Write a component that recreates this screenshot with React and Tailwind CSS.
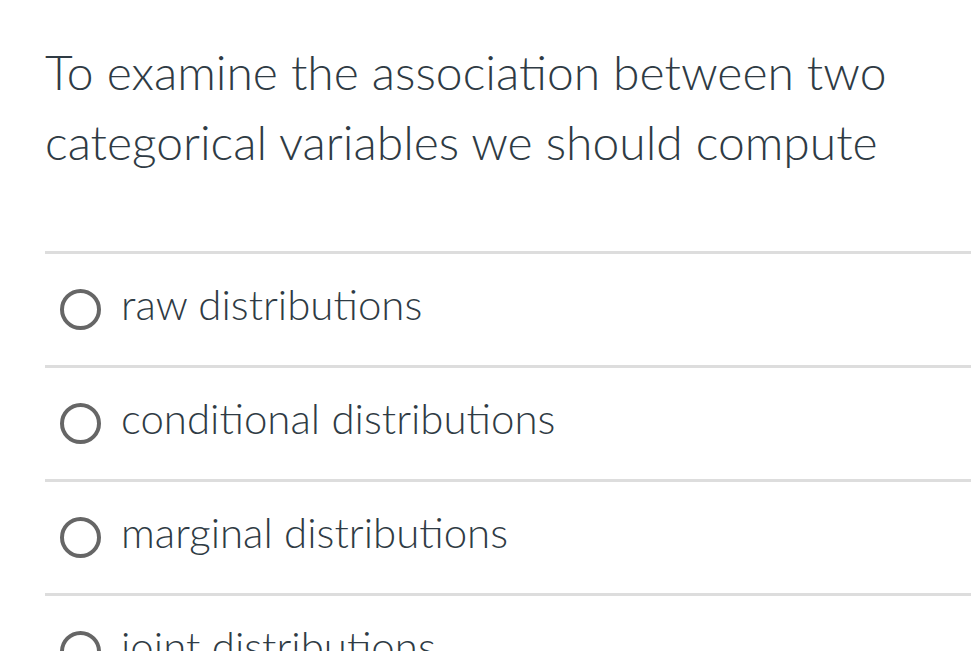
import React from 'react'

const options = [
  'raw distributions',
  'conditional distributions',
  'marginal distributions',
  'joint distributions',
]

function Radio() {
  return (
    <span className="w-[41px] h-[41px] rounded-full border-[4px] border-[#666666] bg-white flex-shrink-0" />
  )
}

export default function App() {
  return (
    <div
      className="w-[971px] h-[651px] overflow-hidden bg-white text-[#2f3b44]"
      style={{ fontFamily: '"Lato Light", Lato, "Open Sans", sans-serif' }}
    >
      <div className="pl-[45px]">
        {/* Question */}
        <p className="pt-[37px] text-[48px] leading-[70px] font-light">
          To examine the association between two
          <br />
          categorical variables we should compute
        </p>

        {/* Answers */}
        <div className="mt-[74px]">
          {options.map((opt) => (
            <div
              key={opt}
              className="h-[114px] border-t-[3px] border-[#dddddd] flex items-center gap-[20px] pl-[15px]"
            >
              <Radio />
              <span className="text-[42px] font-light pb-[10px]">{opt}</span>
            </div>
          ))}
        </div>
      </div>
    </div>
  )
}
